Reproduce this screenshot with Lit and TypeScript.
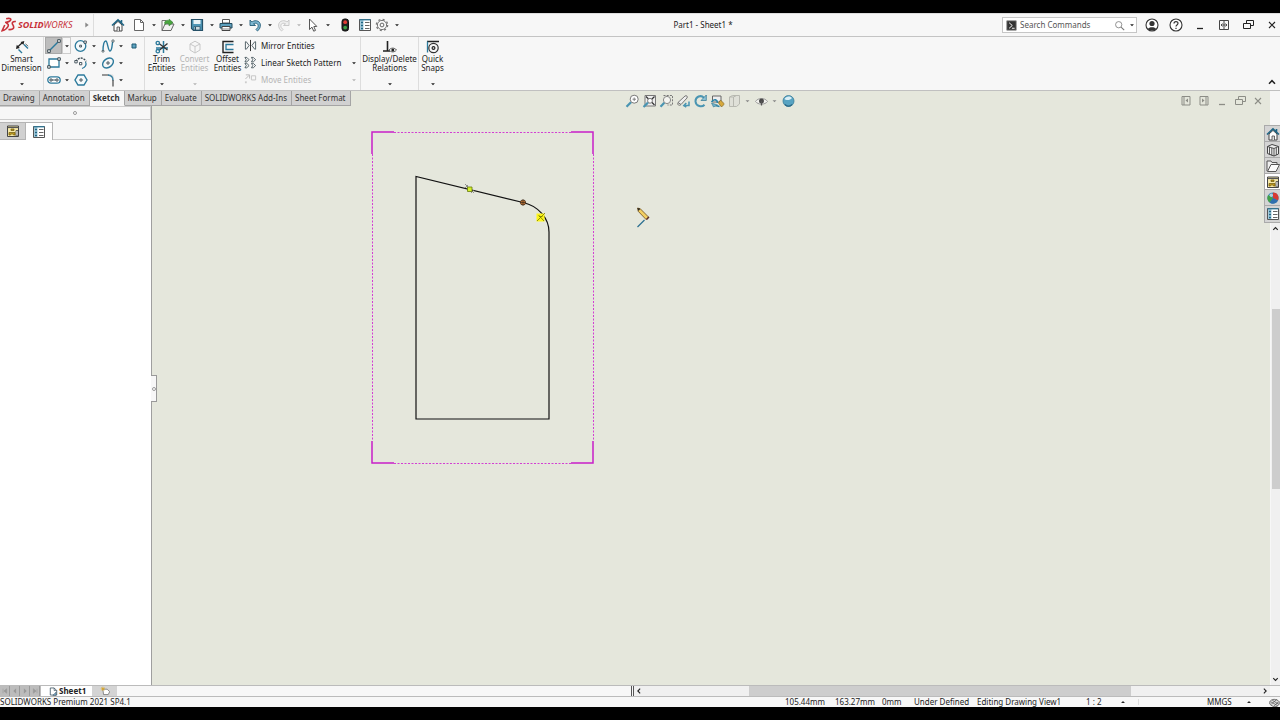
import { LitElement, html, css, svg, nothing } from "lit";
import { customElement } from "lit/decorators.js";
import { classMap } from "lit/directives/class-map.js";

const K = "#3a4a52";
const B = "#2c7a9c";

const glyphs: Record<string, any> = {
  home: svg`<path d="M3 7v6h8V7L7 3.400z" fill="#fff" stroke="#444"/><path d="M6 13V9h2.500v4" fill="#ddd" stroke="#444" stroke-width=".8"/><path d="M1 7.500L7 1.800l6 5.700M10.500 2v3" stroke="#1f6685" stroke-width="1.600"/>`,
  page: svg`<path d="M2.500 1.500h6l3 3v8h-9z" fill="#fff" stroke="#666"/><path d="M8.500 1.500v3h3" stroke="#666"/>`,
  open: svg`<path d="M1 12.500V2.500h4l1 1.500h5v2" fill="#fff" stroke="#777"/><path d="M1 12.500l3-6.500h9l-3 6.500z" fill="#f2f2f2" stroke="#666"/><path d="M3.500 4.500C4.500 2.200 6.500 1.800 8 2.800V1l4 3.500-4 3.500V6C6.500 5.200 5 5.200 4 6.500z" fill="#4aa53f" stroke="#2c7d2c" stroke-width=".5"/>`,
  save: svg`<path d="M1.500 1.500h11v11h-9l-2-2z" fill="#4e95b5" stroke="#255067" stroke-width="1.200"/><path d="M3.500 2h7v4h-7z" fill="#e8f2f6"/><path d="M4 8.500h6V12H4z" fill="#c9d7dd" stroke="#255067" stroke-width=".7"/><path d="M5.500 9v3" stroke="#255067"/>`,
  print: svg`<path d="M3.500 1.500h7V5h-7z" fill="#fff" stroke="#555"/><path d="M1 5.500h12V10H1z" fill="#5ea0bd" stroke="#234c60"/><path d="M3 8.500h8v4H3z" fill="#fff" stroke="#444"/><path d="M3 11h8" stroke="#888"/>`,
  undo: svg`<path d="M2 2v5.500h5.500L5.500 5.800C9 4 11 6.500 9.800 9.500L8 11.500 9.500 13C13.500 10 13.500 3.500 8.500 2.800 6.500 2.500 5 3.200 3.900 4z" fill="#7fb8d2" stroke="#245c78" stroke-width=".9"/>`,
  redo: svg`<path d="M12 2v5.500H6.500L8.500 5.800C5 4 3 6.500 4.200 9.500L6 11.500 4.500 13C.5 10 .5 3.500 5.500 2.800 7.500 2.500 9 3.200 10.100 4z" fill="#efefef" stroke="#c4c4c4" stroke-width=".9"/>`,
  cursor: svg`<path d="M3.500 1v10.500L6 9.200l1.700 4 1.800-.8-1.700-3.800 3-.2z" fill="#fff" stroke="#444" stroke-width=".9"/>`,
  traffic: svg`<rect x="4" y="1" width="6.500" height="12" rx="2.500" fill="#222" stroke="#111"/><circle cx="7.200" cy="4.200" r="1.900" fill="#e23b34"/><circle cx="7.200" cy="9.600" r="1.900" fill="#3ea045"/>`,
  list: svg`<path d="M1.500 1.500h11v11h-11z" fill="#fff" stroke="#555"/><path d="M2 2h3.500v10H2z" fill="#a5cbdb"/><path d="M1.500 1.800h11" stroke="#2c7a9c" stroke-width="1.200"/><path d="M3 4.500h2M3 7.500h2M3 10.500h2" stroke="#1f6685" stroke-width="1.500"/><path d="M7 4.500h4.500M7 7.500h4.500M7 10.500h4.500" stroke="#555" stroke-width=".9"/>`,
  gear: svg`<circle cx="7" cy="7" r="4.600" stroke="#777" fill="#fafafa"/><circle cx="7" cy="7" r="5.600" stroke="#777" stroke-width="1.400" stroke-dasharray="2 2.400"/><circle cx="7" cy="7" r="1.900" stroke="#666"/>`,
  dim: svg`<path d="M2 7.500L7.500 2.500" stroke="#222" stroke-width="1.200"/><path d="M1 9l.8-4.300 3 3.300zM9.300 1L8.500 5 5.500 2z" fill="#222"/><path d="M9 4.500l4 4M3.500 9.500l3.500 3.500" stroke="${B}" stroke-width="1.400"/><path d="M10.500 3.800l2.700 2.400" stroke="#333" stroke-width=".7"/>`,
  line: svg`<path d="M2 12L12 2" stroke="${B}" stroke-width="1.400"/><path d="M.7 10.800h2.600v2.600H.7zM10.700.7h2.600v2.600h-2.600z" fill="#fff" stroke="${K}"/>`,
  circle: svg`<circle cx="6.500" cy="7" r="5.300" stroke="${B}" stroke-width="1.300" fill="#f4fafc"/><path d="M5.700 6.200h1.800v1.800H5.700zM10 2h2.300v2.300H10z" fill="#fff" stroke="${K}" stroke-width=".9"/>`,
  spline: svg`<path d="M2 12.500C2 5 3 2 4.800 2S7 12 9 12s2-5 2.700-10" stroke="${B}" stroke-width="1.400"/><path d="M1 11.500h2V13H1zM11 1h2v2h-2z" fill="#fff" stroke="${K}" stroke-width=".7"/>`,
  point: svg`<path d="M5 5h4v4H5z" fill="#5fa3c0" stroke="#1f5a75"/>`,
  rect: svg`<path d="M2 3h10v8H2z" fill="#fff" stroke="${B}" stroke-width="1.300"/><path d="M.7 9.700h2.500v2.500H.7zM10.800 1.800h2.500v2.500h-2.500z" fill="#fff" stroke="${K}"/>`,
  arc: svg`<path d="M2 5.500C4 1 10 1 12 5.500" stroke="${K}" stroke-width="1.500" stroke-dasharray="2 1"/><path d="M11.500 6c1.500 2.500 0 5.500-3.500 6.500" stroke="${B}" stroke-width="1.300"/><path d="M.8 4.500h2.400v2.400H.8zM5.500 6.500h2.300v2.300H5.500z" fill="#fff" stroke="${K}" stroke-width=".9"/>`,
  ellipse: svg`<ellipse cx="7" cy="7" rx="6" ry="4.300" transform="rotate(-38 7 7)" stroke="${B}" stroke-width="1.400"/><path d="M6 6h2v2H6z" fill="#fff" stroke="${K}" stroke-width=".9"/>`,
  slot: svg`<rect x=".8" y="3.800" width="12.400" height="6.400" rx="3.200" stroke="${B}" stroke-width="1.300" fill="#fff"/><path d="M3 6h2v2H3zM9 6h2v2H9zM5 7h4" stroke="${K}" stroke-width=".9"/>`,
  polygon: svg`<path d="M4 2h6l3 5-3 5H4L1 7z" stroke="${B}" stroke-width="1.400" fill="#f4fafc"/><path d="M6 6h2v2H6z" fill="#fff" stroke="${K}" stroke-width=".9"/>`,
  fillet: svg`<path d="M1 2h6.500" stroke="#555" stroke-width="1.200"/><path d="M7 2c3.500.2 5 2.500 5 5.500" stroke="${B}" stroke-width="1.400"/><path d="M12 7v6.500" stroke="#444" stroke-width="1.200"/><path d="M8.500 2H12v4" stroke="#bbb" stroke-width=".7" stroke-dasharray="1 1"/>`,
  trim: svg`<path d="M1 8h12M8.500 1v12" stroke="${B}" stroke-width="1.500"/><path d="M4 3.500l8.500 6.500M4 10.500L12.500 3.500" stroke="#333" stroke-width="1.300"/><circle cx="2.800" cy="3" r="1.700" stroke="${B}" stroke-width="1.300"/><circle cx="2.800" cy="11.200" r="1.700" stroke="${B}" stroke-width="1.300"/>`,
  cube: svg`<path d="M2 4l5-2.800L12 4v6l-5 3-5-3z" fill="#f7f7f7" stroke="#c8c8c8"/><path d="M2 4l5 2.500L12 4M7 6.500V13" stroke="#c8c8c8"/>`,
  offset: svg`<path d="M12.500 1.500H2v11h10.500" stroke="#222" stroke-width="1.400"/><path d="M12.500 4.500H5v5h7.500" stroke="${B}" stroke-width="1.300"/>`,
  mirror: svg`<path d="M7 1v12" stroke="#333" stroke-width="1.100"/><path d="M1.500 3h1l3 4-3 4h-1zM12.500 3h-1l-3 4 3 4h1z" stroke="${K}" stroke-width=".9"/>`,
  pattern: svg`<path d="M1 1.500h2L5.500 4 3 6.300H1L2.500 4zM8 1.500h2L12.500 4 10 6.300H8L9.500 4zM1 7.900h2l2.500 2.400L3 12.700H1l1.500-2.400zM8 7.900h2l2.500 2.400-2.500 2.400H8l1.500-2.400z" stroke="${K}" stroke-width=".9"/>`,
  move: svg`<path d="M1.500 6.500l4-4M2 2h4v4" stroke="#b8b8b8"/><path d="M8 3h4.500v4.500H8z" stroke="#c4c4c4"/><path d="M1 9h2v2H1z" fill="#ccc"/>`,
  relations: svg`<path d="M4.500 1v9.500M0 11h7" stroke="#222" stroke-width="1.600"/><path d="M6 10c2-2.500 5.500-2.500 7.500 0-2 2.500-5.500 2.500-7.500 0z" fill="#fff" stroke="#333" stroke-width=".8"/><circle cx="9.800" cy="10" r="1.500" fill="#222"/>`,
  snaps: svg`<path d="M1 1.500h12" stroke="#222" stroke-width="1.500"/><path d="M1.500 1.500v11" stroke="${B}" stroke-width="1.300"/><circle cx="7.500" cy="8" r="4.700" stroke="#333" stroke-width="1.200"/><circle cx="7.500" cy="8" r="1.400" stroke="#222" stroke-width="1.200"/>`,
  zoomfit: svg`<circle cx="8.700" cy="5.200" r="4" fill="#fff" stroke="#777"/><path d="M5.500 8.200L1 12.800" stroke="#4a95b2" stroke-width="2.200"/><path d="M7 5.200h3.500M8.700 3.500V7" stroke="#777" stroke-width=".9"/>`,
  zoomsheet: svg`<path d="M2.500 1.500h10.500v10.500H2.500z" fill="#eee" stroke="#777"/><path d="M3.500 2.500L6 5M12 2.500L9 5.500M12 11L9 8" stroke="#333" stroke-width="1.200"/><circle cx="7.500" cy="6.800" r="2.400" fill="#fff" stroke="#777"/><path d="M5.500 8.600L1 13" stroke="#4a95b2" stroke-width="2.200"/>`,
  zoomarea: svg`<path d="M4 1.500h9v9.500H8" stroke="#777" stroke-dasharray="2 1.200"/><circle cx="7.500" cy="6" r="3.600" fill="#fff" fill-opacity=".6" stroke="#888"/><path d="M4.800 8.800L1 12.800" stroke="#4a95b2" stroke-width="2.200"/>`,
  section: svg`<path d="M1.500 8.500l7-6.500c1.500-1 3 .5 2 2L4.500 10.500z" fill="#eee" stroke="#777"/><path d="M1.500 8.500c-1 2 1 4 3 2" stroke="#777"/><path d="M12.500 7.500v4H7.500M9.800 9l-2.500 2.500L9.800 13" stroke="#4a95b2" stroke-width="1.500"/>`,
  rotate: svg`<path d="M11 10.800C8.500 13.500 2.500 12.500 2 7.500 1.800 2.500 7.500.5 10.500 3.800" stroke="#4a95b2" stroke-width="2"/><path d="M12.800 1v5.500H7.500z" fill="#8cc0d4" stroke="#2d7592" stroke-width=".7"/>`,
  views: svg`<path d="M2 2h8.500v6H2z" fill="#eee" stroke="#666"/><path d="M1 8c3-4 6-2 6 1M5 11.500l4 1" stroke="#2d85a8" stroke-width="1.700"/><path d="M1 9l2 4 4-2z" fill="#73b2ca" stroke="#2d7592" stroke-width=".6"/><path d="M8 9l2-3 4 4-3 3z" fill="#d7a93c" stroke="#7b652e" stroke-width=".7"/>`,
  boxgray: svg`<path d="M2 3l3-1.500h7V10l-3 2.500H2z" fill="#dfe0d8" stroke="#b7b8b0"/><path d="M2 3h4v9.500M6 3l3-1.500" stroke="#b7b8b0"/>`,
  eye: svg`<path d="M1 7.500C3.500 3.500 10.500 3.500 13 7.500 10.500 11 3.500 11 1 7.500z" fill="#f2f2ee" stroke="#999"/><circle cx="7" cy="7" r="2.500" fill="#4a4a4a"/><path d="M7 7v4.500" stroke="#555" stroke-width="1.200"/>`,
  sphere: svg`<circle cx="7" cy="7" r="5.500" fill="#57a3c2" stroke="#3a7d99" stroke-width=".8"/><path d="M3 5c1-3 6-3.500 7.500-1-1 2-6 3-7.500 1z" fill="#d9eef6"/><path d="M3.500 10.500c2 2 5 2 7 0" stroke="#2a6784" stroke-width="1.300"/>`,
  palette: svg`<path d="M1.500 2h11v10.500h-11z" fill="#f6e9a8" stroke="#444"/><path d="M1.500 3.500h11" stroke="#555" stroke-width="1.200"/><path d="M5 5h3v1.500H5z" fill="#c09a18" stroke="#6d5810" stroke-width=".7"/><path d="M3 11V8.500h6V11H7.500L6 9.500 4.500 11z" fill="#c09a18" stroke="#6d5810" stroke-width=".7"/><path d="M10 6.500h2V12h-2z" fill="#fff" stroke="#444" stroke-width=".8"/>`,
  library: svg`<path d="M1.500 3.500L6 1.500l6.500 2V11L8 13 1.500 10.500z" fill="#eee" stroke="#444"/><path d="M1.500 3.500L8 5.500 12.500 3.500M8 5.500V13M3.500 4v7.500M5.800 5v7.500M10.300 4.500V12" stroke="#444" stroke-width=".9"/>`,
  folder: svg`<path d="M1 12V2h4l1 1.500h5V5.500" fill="#eee" stroke="#555"/><path d="M1.500 12.500L5 5.500h8.500L10 12.500z" fill="#fafafa" stroke="#555"/>`,
  wheel: svg`<circle cx="7" cy="7" r="5.600" fill="#3d8bb5"/><path d="M7 7V1.400A5.600 5.600 0 0 1 12 9.500z" fill="#d83a34"/><path d="M7 7l5 2.500A5.600 5.600 0 0 1 3.500 11.400z" fill="#2f6fae"/><path d="M7 7L3.500 11.400A5.600 5.600 0 0 1 2.200 4z" fill="#43a047"/><circle cx="5.300" cy="4.300" r="1.700" fill="#fff" fill-opacity=".6"/>`,
  user: svg`<circle cx="7" cy="7" r="6" fill="#fff" stroke="#333" stroke-width="1.100"/><circle cx="7" cy="5.500" r="2.600" fill="#333"/><path d="M3 11c.5-2.500 7.500-2.500 8 0-2 2-6 2-8 0z" fill="#333"/>`,
  help: svg`<circle cx="7" cy="7" r="6" fill="#fff" stroke="#333" stroke-width="1.100"/><path d="M5 5.500C5 3 9 3 9 5.300 9 7 7 6.800 7 8.500M7 9.800v1.300" stroke="#333" stroke-width="1.200"/>`,
  min: svg`<path d="M4 10.500h6" stroke="currentColor" stroke-width="1.300"/>`,
  span: svg`<path d="M2.500 2.500h9v9h-9zM7 2.500v9" stroke="#444"/><path d="M4 7h6M5.500 5.500L4 7l1.500 1.500M8.500 5.500L10 7 8.500 8.500" stroke="#444" stroke-width=".9"/>`,
  restore: svg`<path d="M5.500 5V2.500h7v5H9.500M2.500 5.500h7v5h-7z" stroke="currentColor"/>`,
  close: svg`<path d="M4 4l6 6M10 4l-6 6" stroke="currentColor" stroke-width="1.100"/>`,
  paneleft: svg`<path d="M3 2.500h8v8.500H3zM5 2.500v8.500" stroke="currentColor"/><path d="M9 4.500v4L6.500 6.500z" fill="currentColor"/>`,
  paneright: svg`<path d="M3 2.500h8v8.500H3zM9 2.500v8.500" stroke="currentColor"/><path d="M5 4.500v4L7.500 6.500z" fill="currentColor"/>`,
  command: svg`<path d="M1 1h12v12H1z" fill="#333" stroke="#888"/><path d="M4 3.500L8 7l-4 3.500M7.500 10.500h3.500" stroke="#fff" stroke-width="1.200"/>`,
  search: svg`<circle cx="6" cy="6" r="4" stroke="#777"/><path d="M9 9l4 4" stroke="#777" stroke-width="1.300"/>`,
  chevup: svg`<path d="M3.500 9L7 5.500 10.500 9" stroke="#222" stroke-width="1.800"/>`,
  chevdown: svg`<path d="M3.500 5L7 8.500 10.500 5" stroke="#222" stroke-width="1.800"/>`,
  chevleft: svg`<path d="M9 3L5 7l4 4" stroke="#222" stroke-width="2"/>`,
  chevright: svg`<path d="M5 3l4 4-4 4" stroke="#222" stroke-width="2"/>`,
  caret: svg`<path d="M2.500 5h9L7 10z" fill="currentColor"/>`,
  caretup: svg`<path d="M2.500 9.500h9L7 4.500z" fill="currentColor"/>`,
  play: svg`<path d="M3 1l8 6-8 6z" fill="#888"/>`,
  sheet: svg`<path d="M2 1.500h6l4 4v7H2z" fill="#fff" stroke="#334a5a" stroke-width="1.200"/><path d="M8 1.500v4h4" stroke="#334a5a"/><path d="M6 13l5-5v5z" fill="#7fb0d0" stroke="#334a5a" stroke-width=".8"/>`,
  newsheet: svg`<path d="M4 4.500h6l3.500 3.500-2 4H5z" fill="#fff" stroke="#666"/><path d="M4 1v6M1 4h6M2 2l4 4M6 2L2 6" stroke="#d9a520" stroke-width="1"/>`,
  first: svg`<path d="M10 3v8L5 7zM3.500 3v8" fill="#999" stroke="#999"/>`,
  prev: svg`<path d="M9 2v10L4 7z" fill="#999"/>`,
  next: svg`<path d="M5 2v10L10 7z" fill="#999"/>`,
  last: svg`<path d="M4 3v8l5-4zM10.500 3v8" fill="#999" stroke="#999"/>`,
  tag: svg`<path d="M1 6c2-4 9-4 12 0v3c-3 5-8 4-12 0z" fill="#ddd" stroke="#555"/><path d="M2 6l9 5M4 4l8 5M3 9l7-6M6 12l6-6" stroke="#555" stroke-width=".9"/>`,
  ds: svg`<path d="M4.500 1.500C7 .8 9 1.300 8.500 2.500 8 3.800 5.500 4.500 3.500 4.800M4.500 5.500c3.500.3 2 5-3.500 6.500L3.300 7M13 4C10 3.700 9.300 5 10.300 6.700 12 9.500 11 11.500 6.500 11" stroke="#c8323a" stroke-width="1.400"/>`,
};

const icon = (name: string, size = 14) =>
  html`<svg class="i" width=${size} height=${size} viewBox="0 0 14 14" fill="none" aria-hidden="true">${glyphs[name]}</svg>`;

const btn = (name: string, label: string, cls = "", size = 14) =>
  html`<button class="b ${cls}" aria-label=${label}>${icon(name, size)}</button>`;

const drop = (cls = "") => html`<button class="b caret ${cls}" aria-label="More options">${icon("caret", 6)}</button>`;

@customElement("app-root")
export class AppRoot extends LitElement {
  static styles = css`
    :host {
      display: flex;
      flex-direction: column;
      height: 100vh;
      overflow: hidden;
      box-sizing: border-box;
      border-top: 13px solid #000;
      border-bottom: 13px solid #000;
      background: #f7f7f7;
      color: #222;
      font: 8px/10px "Noto Sans", "Open Sans", sans-serif;
    }
    * { box-sizing: border-box; }
    button, input {
      font: inherit;
      color: inherit;
      border: 0;
      padding: 0;
      margin: 0;
      background: none;
    }
    .i { display: block; flex: none; }
    .b { display: grid; place-items: center; flex: none; }
    .off { color: #b4b4b4; }

    .title {
      display: flex;
      align-items: center;
      flex: none;
      height: 24px;
      border-top: 1px solid #ddd;
      border-bottom: 1px solid #c4c4c4;
    }
    .brand {
      display: flex;
      align-items: center;
      gap: 1px;
      align-self: stretch;
      width: 94px;
      padding-left: 1px;
      border-right: 1px solid #ddd;
      color: #c8323a;
      font-style: italic;
      font-size: 9px;
    }
    .word { flex: 1; }
    .brand .b { width: 12px; }
    .quick { display: flex; padding-left: 17px; }
    .pair { display: flex; width: 29px; }
    .pair .caret { width: 15px; }
    .home { width: 21px; justify-items: start; }
    .solo { width: 20px; }
    .doc { flex: 1; text-align: center; }
    .search {
      display: flex;
      align-items: center;
      gap: 3px;
      width: 135px;
      height: 16px;
      padding: 0 1px 0 3px;
      border: 1px solid #c6c6c6;
      background: #fff;
    }
    .search input { flex: 1; min-width: 0; outline: 0; }
    .search input::placeholder { color: #555; opacity: 1; }
    .search .caret { width: 7px; }
    .win { display: flex; margin: 0 -4px 0 3px; }
    .win .b { width: 24px; }

    .ribbon {
      display: flex;
      flex: none;
      height: 54px;
      border-bottom: 1px solid #c0c0c0;
    }
    .group { display: flex; border-right: 1px solid #ddd; }
    .big {
      display: flex;
      flex-direction: column;
      align-items: center;
      width: 33px;
      padding: 3px 0;
      line-height: 9px;
      text-align: center;
      white-space: nowrap;
    }
    .big .lab { flex: 1; }
    .big.dim { width: 43px; }
    .big.rel { width: 57px; }
    .big.snap { width: 27px; }
    .tools {
      display: grid;
      grid-template-columns: 27px 27px 26px 19px;
      grid-auto-rows: 17px;
      padding-left: 1px;
    }
    .tool { display: flex; align-items: center; }
    .tool .caret { width: 9px; height: 17px; }
    .tool .main { width: 17px; height: 17px; }
    .on .main { background: #bdbdbd; outline: 1px solid #a8a8a8; outline-offset: -1px; }
    .on .caret { border: 1px solid #ccc; }
    .rows { display: flex; flex-direction: column; width: 116px; }
    .row { display: flex; align-items: center; height: 17px; }
    .row button:first-child { display: flex; align-items: center; gap: 4px; flex: 1; text-align: left; }
    .row .caret { width: 12px; }
    .fold { margin: auto 0 2px auto; width: 16px; }

    .tabs { display: flex; flex: none; height: 15px; background: #e5e7dc; }
    .tab {
      padding: 0 4px 0 3px;
      background: #d1d1d1;
      border-right: 1px solid #a5a5a5;
      border-bottom: 1px solid #a5a5a5;
      color: #333;
    }
    .tab.sel { background: #f7f7f7; border-bottom-color: #f7f7f7; font-weight: bold; }
    .edge { margin-left: auto; width: 10px; background: #f7f7f7; }

    .work { position: relative; display: flex; flex: 1; min-height: 0; }
    .panel {
      position: relative;
      z-index: 1;
      display: flex;
      flex-direction: column;
      width: 152px;
      flex: none;
      background: #fff;
      border-right: 1px solid #9f9f9f;
    }
    .grip { height: 14px; background: #f7f7f7; border: 1px solid #ccc; border-left: 0; display: grid; place-items: center; }
    .dot { width: 4px; height: 4px; border: 1px solid #999; border-radius: 50%; background: #fff; }
    .ptabs { display: flex; height: 20px; padding-top: 2px; background: #f7f7f7; border-bottom: 1px solid #ccc; }
    .ptabs .b { width: 26px; height: 18px; background: #d1d1d1; border: 1px solid #b5b5b5; border-left: 0; }
    .ptabs .b.sel { width: 27px; background: #fff; border-bottom: 0; }
    .handle {
      position: absolute;
      right: -6px;
      top: 269px;
      width: 6px;
      height: 27px;
      background: #f7f7f7;
      border: 1px solid #999;
      border-left: 0;
    }
    .canvas { position: relative; flex: 1; background: #e5e7dc; }
    .draw { position: absolute; left: 0; top: 0; }
    .hud { position: absolute; top: -12px; left: 50%; transform: translateX(-50%); display: flex; padding-right: 2px; color: #888; }
    .hud .b { width: 17px; }
    .hud .b.caret { width: 10px; }
    .mdi { position: absolute; top: -12px; right: 3px; display: flex; color: #8c8d86; }
    .mdi .b { width: 18px; }
    .side { display: flex; flex-direction: column; width: 10px; background: #f0f0f0; border-left: 1px solid #f7f7f7; }
    .blank { height: 116px; background: #f7f7f7; }
    .side .b { height: 12px; }
    .track { position: relative; flex: 1; }
    .vthumb { position: absolute; left: 1px; right: 0; top: 17%; height: 41%; background: #cdcdcd; }
    .pane { position: absolute; z-index: 1; right: 0; top: 19px; border: 1px solid #aaa; border-right: 0; }
    .pane .b { width: 15px; height: 16px; background: #d4d4d4; border-bottom: 1px solid #aaa; }
    .pane .b:last-child { border-bottom: 0; }
    .pane .b.sel { background: #fff; }

    .sheets { display: flex; flex: none; height: 12px; border-top: 1px solid #bbb; border-bottom: 1px solid #bbb; }
    .nav { display: flex; background: #bcbcbc; width: 41px; }
    .nav .b { width: 10px; border-right: 1px solid #999; }
    .stab { display: flex; align-items: center; gap: 1px; width: 51px; padding-left: 8px; background: #fff; font-weight: bold; }
    .sheets .new { width: 25px; background: #d4d4d4; }
    .fill { flex: 1; display: flex; }
    .left { flex: 515; border-right: 3px double #555; }
    .hbar { flex: 637; display: flex; background: #f0f0f0; }
    .hbar .b { width: 10px; }
    .hthumb { position: absolute; left: 17%; width: 62%; top: 0; bottom: 0; background: #cdcdcd; }
    .corner { width: 10px; }

    .status { display: flex; align-items: center; flex: none; height: 10px; white-space: nowrap; }
    .status .app { flex: 1; }
    .s1 { width: 50px; }
    .s2 { width: 47px; }
    .s3 { width: 32px; }
    .s4 { width: 63px; }
    .s5 { width: 109px; }
    .s6 { width: 34px; }
    .s7 { width: 19px; border-right: 1px solid #ddd; display: flex; }
    .s8 { width: 39px; }
    .s9 { width: 23px; }
    .gap { width: 68px; }
  `;

  private pair(name: string, label: string, off = false) {
    return html`<div class="pair">${btn(name, label)}${drop(off ? "off" : "")}</div>`;
  }

  private tool(name: string, label: string, caret = true, on = false) {
    return html`<div class=${classMap({ tool: true, on })}>
      ${btn(name, label, "main")}${caret ? drop() : nothing}
    </div>`;
  }

  private big(name: string, top: unknown, bottom: string, cls = "", caret = true) {
    return html`<button class="big ${cls}">
      ${icon(name)}<span class="lab">${top}<br />${bottom}</span>
      ${caret ? icon("caret", 6) : nothing}
    </button>`;
  }

  private row(name: string, label: string, caret: boolean, off = false) {
    return html`<div class="row ${off ? "off" : ""}">
      <button>${icon(name, 13)}<span>${label}</span></button>
      ${caret ? drop() : nothing}
    </div>`;
  }

  render() {
    return html`
      <header class="title">
        <div class="brand">${icon("ds", 16)}<span class="word"><b>SOLID</b>WORKS</span>${btn("play", "Show menu", "", 6)}</div>
        <div class="quick">
          ${btn("home", "Home", "home")} ${this.pair("page", "New")} ${this.pair("open", "Open")}
          ${this.pair("save", "Save")} ${this.pair("print", "Print")} ${this.pair("undo", "Undo")}
          ${this.pair("redo", "Redo", true)} ${this.pair("cursor", "Select")}
          ${btn("traffic", "Rebuild", "solo")} ${btn("list", "File properties", "solo")}
          ${this.pair("gear", "Options")}
        </div>
        <div class="doc">Part1 - Sheet1 *</div>
        <div class="search">
          ${icon("command", 11)}
          <input aria-label="Search Commands" placeholder="Search Commands" />
          ${btn("search", "Search", "", 11)} ${drop()}
        </div>
        <div class="win">
          ${btn("user", "Account")} ${btn("help", "Help")} ${btn("min", "Minimize")}
          ${btn("span", "Span displays")} ${btn("restore", "Restore")} ${btn("close", "Close")}
        </div>
      </header>

      <section class="ribbon">
        <div class="group">${this.big("dim", "Smart", "Dimension", "dim")}</div>
        <div class="group tools">
          ${this.tool("line", "Line", true, true)} ${this.tool("circle", "Circle")}
          ${this.tool("spline", "Spline")} ${this.tool("point", "Point", false)}
          ${this.tool("rect", "Rectangle")} ${this.tool("arc", "Arc")} ${this.tool("ellipse", "Ellipse")} <i></i>
          ${this.tool("slot", "Slot")} ${this.tool("polygon", "Polygon", false)} ${this.tool("fillet", "Fillet")}
        </div>
        <div class="group">
          ${this.big("trim", html`<u>T</u>rim`, "Entities")}
          ${this.big("cube", "Convert", "Entities", "off")}
          ${this.big("offset", "Offset", "Entities", "", false)}
          <div class="rows">
            ${this.row("mirror", "Mirror Entities", false)}
            ${this.row("pattern", "Linear Sketch Pattern", true)}
            ${this.row("move", "Move Entities", true, true)}
          </div>
        </div>
        <div class="group">${this.big("relations", "Display/Delete", "Relations", "rel")}</div>
        ${this.big("snaps", "Quick", "Snaps", "snap")}
        ${btn("chevup", "Collapse ribbon", "fold", 12)}
      </section>

      <nav class="tabs">
        ${["Drawing", "Annotation", "Sketch", "Markup", "Evaluate", "SOLIDWORKS Add-Ins", "Sheet Format"].map(
          (t, n) => html`<button class=${classMap({ tab: true, sel: n === 2 })}>${t}</button>`
        )}
        <div class="edge"></div>
      </nav>

      <main class="work">
        <aside class="panel">
          <div class="grip"><span class="dot"></span></div>
          <div class="ptabs">${btn("palette", "Sheet tree", "", 14)}${btn("list", "Properties", "sel", 14)}</div>
          <button class="b handle" aria-label="Collapse panel"><span class="dot"></span></button>
        </aside>
        <div class="canvas">
          <svg class="draw" width="520" height="380" viewBox="152 106 520 380" fill="none">
            <path d="M394 132.500H571M394 463.500H571M372.500 154V441M593.500 154V441" stroke="#d23fd2" stroke-dasharray="2 1.500" />
            <path d="M394 132H372V154M571 132H593V154M372 441V463H394M593 441V463H571" stroke="#c81fc8" stroke-width="1.500" />
            <path d="M549 232V419H416V176.500L523 202.500C539 206 549 219 549 232" stroke="#111" stroke-width="1.200" />
            <path d="M465 184l9 9M465 188l3-3M471 193l3-3" stroke="#777" stroke-width=".8" />
            <path d="M467.500 187h4.500v4.500h-4.500z" fill="#d4f02a" stroke="#66780e" stroke-width=".8" />
            <circle cx="523" cy="202.500" r="2.600" fill="#c67a3a" stroke="#3d2a18" stroke-width=".8" />
            <path d="M520 202.500h6M523 199.500v6" stroke="#3d2a18" stroke-width=".7" />
            <path d="M536.500 213.500h8v8h-8z" fill="#fdf51a" />
            <path d="M537 221l8-8M538.500 215l5.500 6M539 216.500h3.500" stroke="#777a00" stroke-width=".8" />
            <path d="M637.500 208l2.800.8 8.200 8.200-2.300 2.600-8-8.300z" fill="#f3cf63" stroke="#6b4b1a" stroke-width=".8" />
            <path d="M637.500 208l1 3 1.800-2.200z" fill="#222" />
            <path d="M646.500 219.500l2.500-2.500" stroke="#5a2d2d" stroke-width="1.500" />
            <path d="M637.500 227l7-7" stroke="#2c6f90" stroke-width="1.200" />
          </svg>
          <div class="hud">
            ${btn("zoomfit", "Zoom to fit")}${btn("zoomsheet", "Zoom to sheet")}${btn("zoomarea", "Zoom to area")}
            ${btn("section", "Section view")}${btn("rotate", "Rotate view")}${btn("views", "3D drawing view")}
            ${btn("boxgray", "Display style")}${drop()}${btn("eye", "Hide or show items")}${drop()}${btn("sphere", "Appearance")}
          </div>
          <div class="mdi">
            ${btn("paneleft", "Previous pane")}${btn("paneright", "Next pane")}${btn("min", "Minimize sheet")}
            ${btn("restore", "Restore sheet")}${btn("close", "Close sheet")}
          </div>
        </div>
        <div class="side">
          <div class="blank"></div>
          ${btn("chevup", "Scroll up", "", 9)}
          <div class="track"><div class="vthumb"></div></div>
          ${btn("chevdown", "Scroll down", "", 9)}
        </div>
        <div class="pane">
          ${btn("home", "Resources")}${btn("library", "Design library")}${btn("folder", "File explorer")}
          ${btn("palette", "View palette", "sel")}${btn("wheel", "Appearances")}${btn("list", "Custom properties")}
        </div>
      </main>

      <section class="sheets">
        <div class="nav">
          ${btn("first", "First sheet", "", 8)}${btn("prev", "Previous sheet", "", 8)}${btn("next", "Next sheet", "", 8)}${btn("last", "Last sheet", "", 8)}
        </div>
        <button class="stab">${icon("sheet", 9)}Sheet1</button>
        ${btn("newsheet", "Add sheet", "new", 10)}
        <div class="fill">
          <div class="left"></div>
          <div class="hbar">
            ${btn("chevleft", "Scroll left", "", 8)}
            <div class="track"><div class="hthumb"></div></div>
            ${btn("chevright", "Scroll right", "", 8)}
          </div>
        </div>
        <div class="corner"></div>
      </section>

      <footer class="status">
        <span class="app">SOLIDWORKS Premium 2021 SP4.1</span>
        <span class="s1">105.44mm</span><span class="s2">163.27mm</span><span class="s3">0mm</span>
        <span class="s4">Under Defined</span><span class="s5">Editing Drawing View1</span>
        <span class="s6">1 : 2</span><span class="s7">${icon("caretup", 6)}</span><span class="gap"></span>
        <span class="s8">MMGS</span><span class="s9">${icon("caretup", 6)}</span>${icon("tag", 11)}
      </footer>
    `;
  }
}
